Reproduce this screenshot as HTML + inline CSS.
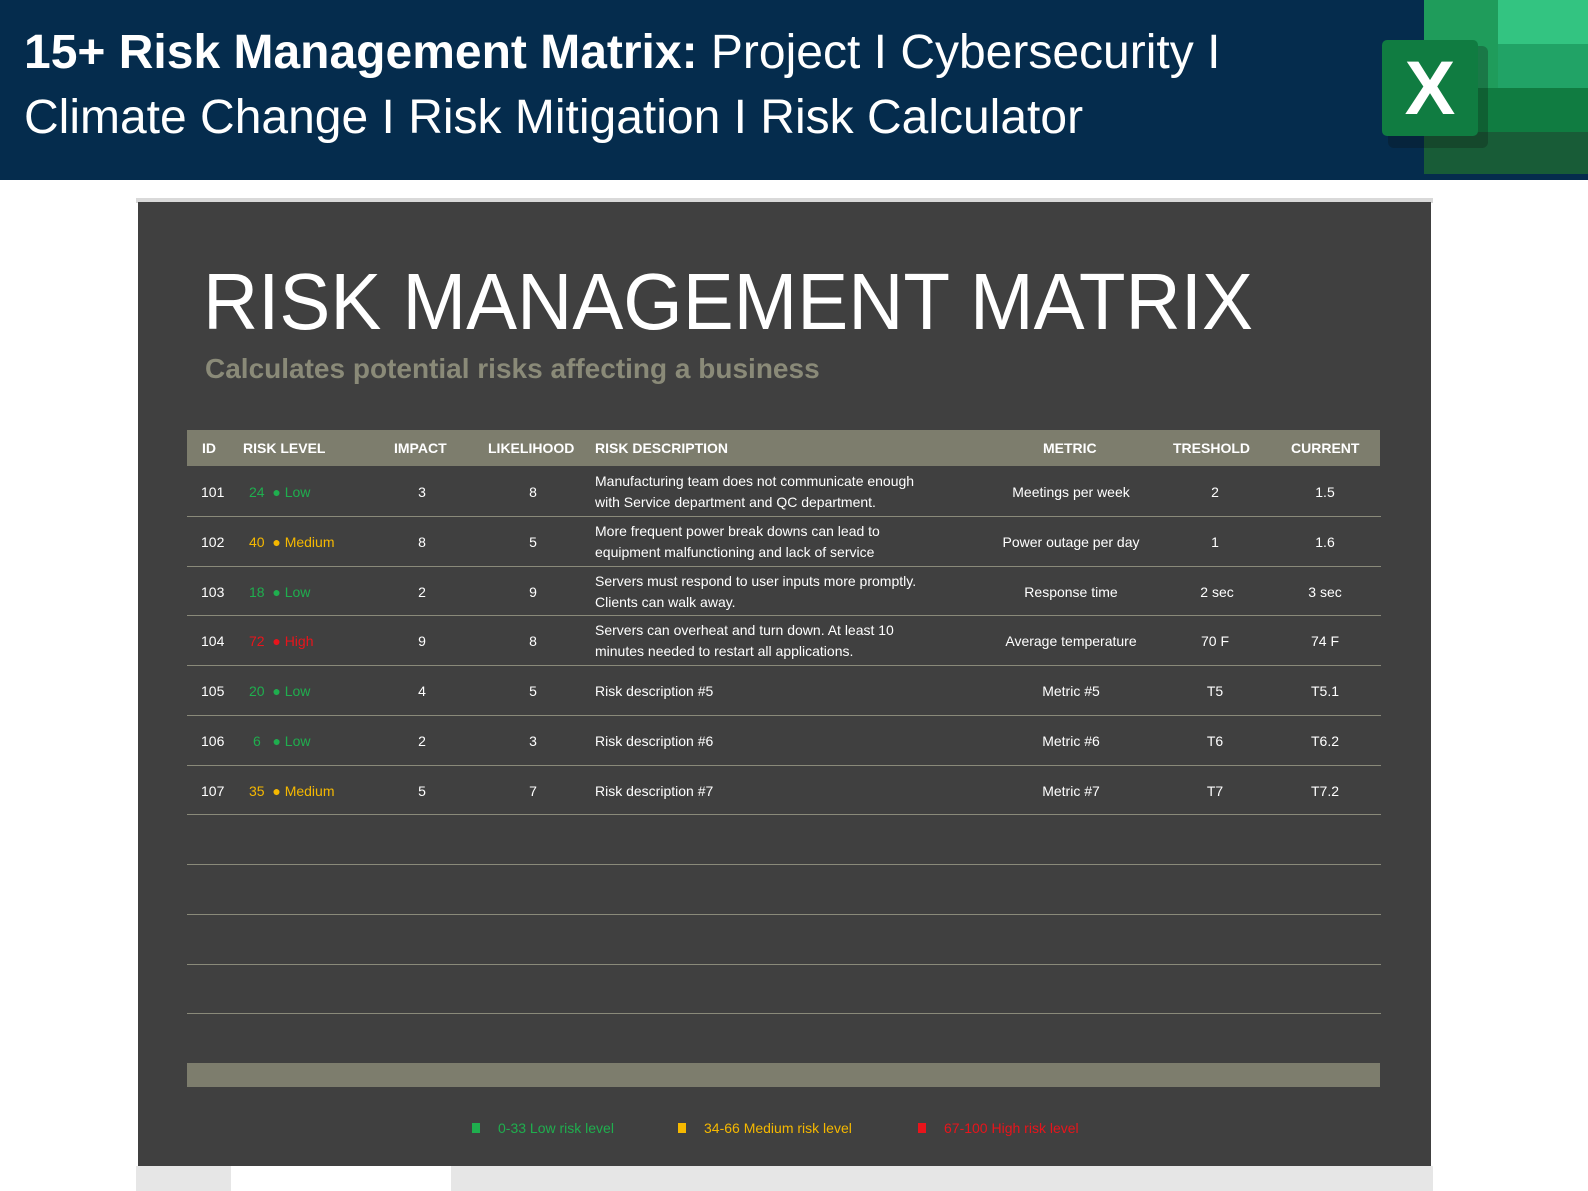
<!DOCTYPE html>
<html><head><meta charset="utf-8"><style>
*{margin:0;padding:0;box-sizing:border-box}
body{width:1588px;height:1191px;background:#fff;position:relative;overflow:hidden;font-family:"Liberation Sans",sans-serif}
.ban{position:absolute;left:0;top:0;width:1588px;height:180px;background:#052c4d}
.bt{position:absolute;left:24px;color:#fff;font-size:48px;white-space:nowrap;line-height:1}
.panel{position:absolute;left:138px;top:202px;width:1293px;height:964px;background:#404040}
.topline{position:absolute;left:136px;top:198px;width:1297px;height:5px;background:#d9d9d9}
.a{position:absolute;white-space:nowrap;line-height:1}
.hdr{position:absolute;left:187px;top:430px;width:1193px;height:36px;background:#7d7d6d}
.h{position:absolute;top:441px;color:#fff;font-weight:bold;font-size:14px;line-height:1}
.sep{position:absolute;left:187px;width:1194px;height:1px;background:#8a8a7a}
.c{position:absolute;color:#fff;font-size:14px;line-height:1;white-space:nowrap}
.ctr{transform:translateX(-50%)}
.d{line-height:21px}
</style></head><body>
<div class="ban"></div>
<div class="bt" style="top:29px"><b>15+ Risk Management Matrix:</b> Project I Cybersecurity I</div>
<div class="bt" style="top:94px">Climate Change I Risk Mitigation I Risk Calculator</div>
<svg style="position:absolute;left:1380px;top:0" width="208" height="175" viewBox="0 0 208 175">
<rect x="44" y="-10" width="170" height="184" rx="10" fill="#1f9c5b"/>
<rect x="118" y="-10" width="96" height="54" fill="#33c481"/>
<rect x="118" y="44" width="96" height="44" fill="#21a366"/>
<rect x="44" y="88" width="170" height="44" fill="#107c41"/>
<rect x="44" y="132" width="170" height="42" fill="#185c37"/>
<rect x="4" y="42" width="100" height="102" rx="6" fill="#0b0b0b" opacity=".25" transform="translate(4,4)"/>
<rect x="2" y="40" width="96" height="96" rx="5" fill="#107c41"/>
<text x="50" y="114" text-anchor="middle" fill="#fff" font-family="Liberation Sans" font-weight="bold" font-size="76">X</text>
</svg>
<div class="topline"></div>
<div class="panel"></div>
<div class="a" style="left:203px;top:262px;color:#fff;font-size:80px;transform-origin:left;transform:scaleX(0.955)">RISK MANAGEMENT MATRIX</div>
<div class="a" style="left:205px;top:355px;color:#8a8a78;font-size:28px;font-weight:bold">Calculates potential risks affecting a business</div>
<div class="hdr"></div>
<div class="h" style="left:202px">ID</div>
<div class="h" style="left:243px">RISK LEVEL</div>
<div class="h" style="left:394px">IMPACT</div>
<div class="h" style="left:488px">LIKELIHOOD</div>
<div class="h" style="left:595px">RISK DESCRIPTION</div>
<div class="h" style="left:1043px">METRIC</div>
<div class="h" style="left:1173px">TRESHOLD</div>
<div class="h" style="left:1291px">CURRENT</div>

<div class="sep" style="top:516px"></div><div class="sep" style="top:566px"></div><div class="sep" style="top:615px"></div><div class="sep" style="top:665px"></div><div class="sep" style="top:715px"></div><div class="sep" style="top:765px"></div><div class="sep" style="top:814px"></div><div class="sep" style="top:864px"></div><div class="sep" style="top:914px"></div><div class="sep" style="top:964px"></div><div class="sep" style="top:1013px"></div>

<div class="c" style="left:201px;top:485px">101</div><div class="c" style="left:249px;top:485px;color:#1fae4e">24 &nbsp;● Low</div><div class="c ctr" style="left:422px;top:485px">3</div><div class="c ctr" style="left:533px;top:485px">8</div><div class="c d" style="left:595px;top:471px">Manufacturing team does not communicate enough<br>with Service department and QC department.</div><div class="c ctr" style="left:1071px;top:485px">Meetings per week</div><div class="c ctr" style="left:1215px;top:485px">2</div><div class="c ctr" style="left:1325px;top:485px">1.5</div>

<div class="c" style="left:201px;top:535px">102</div><div class="c" style="left:249px;top:535px;color:#f5b800">40 &nbsp;● Medium</div><div class="c ctr" style="left:422px;top:535px">8</div><div class="c ctr" style="left:533px;top:535px">5</div><div class="c d" style="left:595px;top:521px">More frequent power break downs can lead to<br>equipment malfunctioning and lack of service</div><div class="c ctr" style="left:1071px;top:535px">Power outage per day</div><div class="c ctr" style="left:1215px;top:535px">1</div><div class="c ctr" style="left:1325px;top:535px">1.6</div>

<div class="c" style="left:201px;top:585px">103</div><div class="c" style="left:249px;top:585px;color:#1fae4e">18 &nbsp;● Low</div><div class="c ctr" style="left:422px;top:585px">2</div><div class="c ctr" style="left:533px;top:585px">9</div><div class="c d" style="left:595px;top:571px">Servers must respond to user inputs more promptly.<br>Clients can walk away.</div><div class="c ctr" style="left:1071px;top:585px">Response time</div><div class="c ctr" style="left:1217px;top:585px">2 sec</div><div class="c ctr" style="left:1325px;top:585px">3 sec</div>

<div class="c" style="left:201px;top:634px">104</div><div class="c" style="left:249px;top:634px;color:#e8141b">72 &nbsp;● High</div><div class="c ctr" style="left:422px;top:634px">9</div><div class="c ctr" style="left:533px;top:634px">8</div><div class="c d" style="left:595px;top:620px">Servers can overheat and turn down. At least 10<br>minutes needed to restart all applications.</div><div class="c ctr" style="left:1071px;top:634px">Average temperature</div><div class="c ctr" style="left:1215px;top:634px">70 F</div><div class="c ctr" style="left:1325px;top:634px">74 F</div>

<div class="c" style="left:201px;top:684px">105</div><div class="c" style="left:249px;top:684px;color:#1fae4e">20 &nbsp;● Low</div><div class="c ctr" style="left:422px;top:684px">4</div><div class="c ctr" style="left:533px;top:684px">5</div><div class="c" style="left:595px;top:684px">Risk description #5</div><div class="c ctr" style="left:1071px;top:684px">Metric #5</div><div class="c ctr" style="left:1215px;top:684px">T5</div><div class="c ctr" style="left:1325px;top:684px">T5.1</div>

<div class="c" style="left:201px;top:734px">106</div><div class="c" style="left:253px;top:734px;color:#1fae4e">6 &nbsp;&nbsp;● Low</div><div class="c ctr" style="left:422px;top:734px">2</div><div class="c ctr" style="left:533px;top:734px">3</div><div class="c" style="left:595px;top:734px">Risk description #6</div><div class="c ctr" style="left:1071px;top:734px">Metric #6</div><div class="c ctr" style="left:1215px;top:734px">T6</div><div class="c ctr" style="left:1325px;top:734px">T6.2</div>

<div class="c" style="left:201px;top:784px">107</div><div class="c" style="left:249px;top:784px;color:#f5b800">35 &nbsp;● Medium</div><div class="c ctr" style="left:422px;top:784px">5</div><div class="c ctr" style="left:533px;top:784px">7</div><div class="c" style="left:595px;top:784px">Risk description #7</div><div class="c ctr" style="left:1071px;top:784px">Metric #7</div><div class="c ctr" style="left:1215px;top:784px">T7</div><div class="c ctr" style="left:1325px;top:784px">T7.2</div>

<div style="position:absolute;left:187px;top:1063px;width:1193px;height:24px;background:#7d7d6d"></div>
<div class="c" style="left:472px;top:1121px;color:#1fae4e"><span style="display:inline-block;width:8px;height:10px;background:#1fae4e;margin-right:18px"></span>0-33 Low risk level</div>
<div class="c" style="left:678px;top:1121px;color:#f5b800"><span style="display:inline-block;width:8px;height:10px;background:#f5b800;margin-right:18px"></span>34-66 Medium risk level</div>
<div class="c" style="left:918px;top:1121px;color:#e8141b"><span style="display:inline-block;width:8px;height:10px;background:#e8141b;margin-right:18px"></span>67-100 High risk level</div>
<div style="position:absolute;left:136px;top:1166px;width:1297px;height:25px;background:#e6e6e6"></div>
<div style="position:absolute;left:231px;top:1166px;width:220px;height:25px;background:#fff"></div>
</body></html>
